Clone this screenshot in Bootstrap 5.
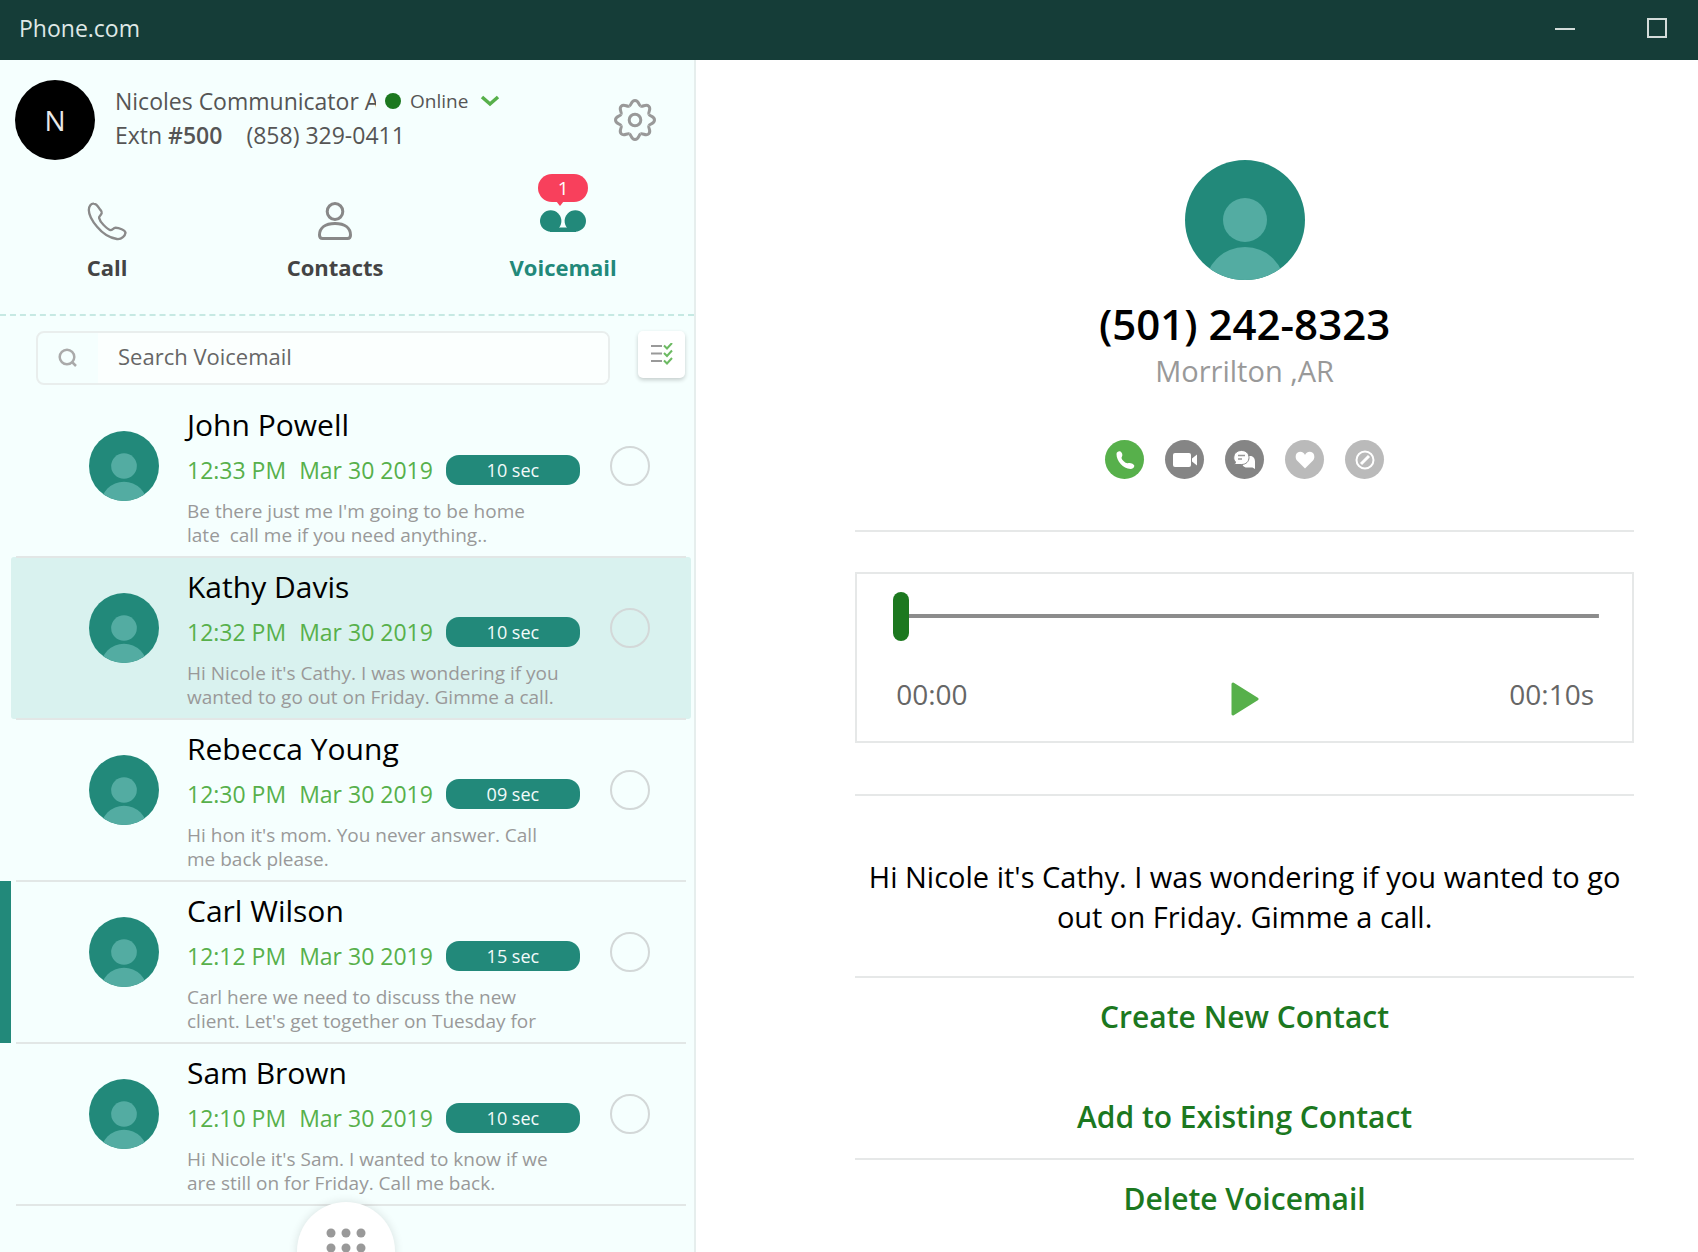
<!DOCTYPE html>
<html lang="en">
<head>
<meta charset="utf-8">
<meta name="viewport" content="width=device-width, initial-scale=1">
<title>Phone.com</title>
<link href="https://cdn.jsdelivr.net/npm/bootstrap@5.3.0/dist/css/bootstrap.min.css" rel="stylesheet">
<style>
:root { --teal: #22897a; --mint: #f5fffe; --leaf: #57b04b; --forest: #1c781f; --rule: #e6e8e8; }
body { font-family: "Open Sans", "Noto Sans", sans-serif; color: #000; background: #fff; height: 100vh; overflow: hidden; }
svg { display: block; flex-shrink: 0; }
.btn { --bs-btn-padding-x: 0; --bs-btn-padding-y: 0; --bs-btn-border-width: 0; }
.title-bar { background: #153d38; height: 60px; color: #dfe8e6; font-size: 23px; padding: 0 31px 4px 19px; }
.window-buttons { gap: 72px; }
.side-pane { flex: 0 0 41%; background: var(--mint); border-right: 2px solid #e6eeed; }
.profile { padding: 20px 37px 0 15px; color: #555; font-size: 23px; line-height: 34px; }
.initial { width: 80px; height: 80px; background: #000; color: #e8e8e8; font-size: 28px; }
.account { margin-left: 20px; padding-bottom: 5px; }
.account-name { width: 261px; white-space: nowrap; overflow: hidden; }
.status-dot { width: 16px; height: 16px; background: var(--forest); margin: 0 9px; }
.status-btn { font-size: 19px; line-height: 30px; color: #555; }
.tabs { padding: 42px 67px 32px 43px; border-bottom: 2px dashed #c6e9e3; }
.tab-link { width: 128px; font-size: 22px; line-height: 30px; font-weight: 700; color: #444; text-decoration: none; }
.tab-link.active { color: var(--teal); }
.tab-icon { height: 38px; margin-bottom: 12px; }
.count-bubble { position: absolute; left: 50%; top: -28px; width: 50px; height: 28px; margin-left: -25px; border-radius: 14px; background: #f8405c; color: #fff; font-size: 19px; font-weight: 400; line-height: 28px; text-align: center; }
.count-bubble::after { content: ""; position: absolute; left: 18px; top: 27px; border: 4px solid transparent; border-top: 5px solid #f8405c; }
.search-row { padding: 15px 9px 10px 36px; gap: 28px; }
.search-box { height: 54px; border: 2px solid #e9eeed; border-radius: 8px; overflow: hidden; }
.search-box label { width: 60px; }
.search-box input { border: 0; border-radius: 0; background: #fbfffe; padding: 0 20px 4px; font-size: 22px; color: #555; }
.search-box input::placeholder { color: #666; opacity: 1; }
.select-btn { width: 47px; height: 47px; border-radius: 5px; background: #fff; box-shadow: 0 2px 4px rgba(0,0,0,.2); }
.voicemail { position: relative; padding: 10px 41px 8px 78px; margin: 0 3px 0 11px; }
.voicemail::after { content: ""; position: absolute; left: 5px; right: 5px; bottom: -1px; height: 2px; background: #e2e7e6; z-index: 1; }
.voicemail.selected { background: #d9f2ef; border-radius: 3px; }
.voicemail.unread { margin-left: 0; border-left: 11px solid var(--teal); }
.voicemail .avatar { margin: 26px 28px 0 0; }
.vm-name { font-size: 30px; line-height: 40px; margin: 0; font-weight: 400; }
.vm-meta { font-size: 23px; line-height: 30px; margin-top: 10px; gap: 13px; color: var(--leaf); white-space: nowrap; }
.vm-length { flex: 0 0 134px; border-radius: 13px; background: var(--teal); color: #f2fbfa; font-size: 18px; text-align: center; }
.vm-text { font-size: 19px; line-height: 24px; margin: 14px 0 2px; color: #999; white-space: nowrap; }
.vm-check { width: 40px; height: 40px; margin: 41px 0 0; border: 2px solid #d3d8d8; background-color: transparent; }
.keypad-btn { position: absolute; left: 50%; bottom: -48px; width: 98px; height: 98px; margin-left: -50px; border-radius: 50%; background: #fff; box-shadow: 0 0 10px rgba(0,0,0,.12); z-index: 2; }
.detail-pane { padding: 100px 64px 0 159px; }
.caller { font-size: 42px; line-height: 50px; font-weight: 600; margin: 19px 0 2px; }
.place { font-size: 29px; line-height: 40px; color: #999; margin: 0 0 49px; }
.round-actions { gap: 21px; margin-bottom: 51px; }
.round-actions .btn { width: 39px; height: 39px; border-radius: 50%; background: #858585; }
.round-actions .btn.call { background: var(--leaf); }
.round-actions .btn.muted { background: #bababa; }
.rule { width: 100%; height: 2px; border: 0; margin: 0; background: var(--rule); opacity: 1; }
.player { margin: 40px 0 51px; padding: 17px 33px 25px 36px; border: 2px solid var(--rule); }
.seek { display: block; width: 100%; height: 50px; appearance: none; -webkit-appearance: none; background: linear-gradient(#8c8c8c, #8c8c8c) center / 100% 4px no-repeat; margin: 0; }
.seek::-webkit-slider-thumb { -webkit-appearance: none; width: 16px; height: 49px; border-radius: 8px; background: var(--forest); border: 0; }
.times { font-size: 28px; line-height: 40px; color: #666; margin-top: 33px; padding: 0 5px 0 3px; }
.transcript { font-size: 29px; line-height: 40px; margin: 61px 0 39px; }
.contact-link { font-size: 30px; line-height: 40px; font-weight: 600; color: var(--forest); text-decoration: none; }
.contact-links { padding: 19px 0 21px; gap: 60px; }
</style>
</head>
<body class="d-flex flex-column">
<svg width="0" height="0" class="position-absolute" aria-hidden="true">
  <defs>
    <clipPath id="disc"><circle cx="60" cy="60" r="60"/></clipPath>
    <symbol id="person" viewBox="0 0 120 120">
      <g clip-path="url(#disc)"><rect width="120" height="120" fill="#22897a"/><circle cx="60" cy="60" r="22" fill="#53aca2"/><circle cx="60" cy="127" r="40" fill="#53aca2"/></g>
    </symbol>
    <path id="lobe" d="M-5.7-13.9C-3.4-14.8-4-19.5 0-19.5S3.4-14.8 5.7-13.9"/>
    <symbol id="handset" viewBox="22 18 120 118">
      <path d="M27 42C27 30 34 22 42 23C52 24 55 32 59 38C63 44 68 46 66 52C64 58 57 61 58 66C60 74 64 80 71 87C78 94 86 101 92 103C99 104 100 96 108 96C118 96 137 103 138 111C137 119 127 132 112 130C92 127 70 115 52 93C37 75 27 57 27 42Z"/>
    </symbol>
  </defs>
</svg>

<header class="title-bar d-flex align-items-center justify-content-between flex-shrink-0">
  <span>Phone.com</span>
  <div class="window-buttons d-flex">
    <button class="btn" aria-label="Minimize"><svg width="20" height="20"><path d="M0 11H20" stroke="#d3dcda" stroke-width="2"/></svg></button>
    <button class="btn" aria-label="Maximize"><svg width="20" height="20"><rect x="1" y="1" width="18" height="18" fill="none" stroke="#d3dcda" stroke-width="2"/></svg></button>
  </div>
</header>

<div class="d-flex flex-grow-1 overflow-hidden">
  <aside class="side-pane position-relative overflow-hidden">
    <div class="profile d-flex align-items-center">
      <div class="initial rounded-circle d-flex align-items-center justify-content-center flex-shrink-0">N</div>
      <div class="account">
        <div class="d-flex align-items-center">
          <span class="account-name">Nicoles Communicator A</span>
          <span class="status-dot rounded-circle"></span>
          <button class="btn status-btn d-flex align-items-center gap-2">Online
            <svg class="ms-1" width="20" height="12" viewBox="0 0 20 12" fill="none" stroke="#57b04b" stroke-width="3.500"><path d="M2 2L10 9L18 2"/></svg>
          </button>
        </div>
        <div class="d-flex"><span>Extn <span class="fw-semibold">#500</span></span><span class="ms-4">(858) 329-0411</span></div>
      </div>
      <button class="btn ms-auto" aria-label="Settings">
        <svg width="44" height="44" viewBox="-22 -22 44 44" fill="none" stroke="#999" stroke-width="3">
          <use href="#lobe"/><use href="#lobe" transform="rotate(45)"/><use href="#lobe" transform="rotate(90)"/><use href="#lobe" transform="rotate(135)"/><use href="#lobe" transform="rotate(180)"/><use href="#lobe" transform="rotate(225)"/><use href="#lobe" transform="rotate(270)"/><use href="#lobe" transform="rotate(315)"/><circle r="5.8"/>
        </svg>
      </button>
    </div>

    <nav class="tabs d-flex justify-content-between">
      <a class="tab-link text-center" href="#">
        <span class="tab-icon d-flex align-items-center justify-content-center"><svg width="40" height="39" fill="none" stroke="#8a8a8a" stroke-width="7"><use href="#handset"/></svg></span>Call</a>
      <a class="tab-link text-center" href="#">
        <span class="tab-icon d-flex align-items-center justify-content-center"><svg width="36" height="38" viewBox="0 0 36 38" fill="none" stroke="#888" stroke-width="3"><ellipse cx="18" cy="9.500" rx="7.800" ry="8"/><path d="M2.500 33C2.500 26 8 21.500 18 21.500S33.500 26 33.500 33Q33.500 36.500 30.500 36.500H5.500Q2.500 36.500 2.500 33Z"/></svg></span>Contacts</a>
      <a class="tab-link active text-center position-relative" href="#" aria-current="page">
        <span class="tab-icon d-flex align-items-center justify-content-center"><svg width="46" height="22" viewBox="0 0 46 22" fill="#22897a"><circle cx="10.700" cy="11" r="10.700"/><circle cx="35.300" cy="11" r="10.700"/><path d="M10 22V10H20.500Q20.500 15 18.500 17.500H27.500Q25.500 15 25.500 10H36V22Z"/></svg></span>Voicemail
        <span class="count-bubble">1</span></a>
    </nav>

    <div class="search-row d-flex">
      <div class="search-box d-flex flex-grow-1">
        <label for="search" class="d-flex align-items-center justify-content-center flex-shrink-0" aria-label="Search"><svg width="20" height="20" fill="none" stroke="#aaa" stroke-width="2.500"><circle cx="9" cy="9" r="7.300"/><path d="M13.500 13.500L18 18"/></svg></label>
        <input id="search" class="form-control shadow-none" type="text" placeholder="Search Voicemail">
      </div>
      <button class="btn select-btn d-flex align-items-center justify-content-center flex-shrink-0" aria-label="Select voicemails">
        <svg width="24" height="24" fill="none"><path d="M1 3H12M1 10.500H12M1 18H12" stroke="#999" stroke-width="2"/><path d="M14 2.500L17 5.500L22 0M14 10L17 13L22 7.500M14 17.500L17 20.500L22 15" stroke="#6cba62" stroke-width="2"/></svg>
      </button>
    </div>

    <ul class="list-unstyled m-0">
      <li class="voicemail d-flex align-items-start">
        <svg class="avatar" width="70" height="70"><use href="#person"/></svg>
        <div><h2 class="vm-name">John Powell</h2>
          <div class="vm-meta d-flex"><span>12:33 PM</span><span>Mar 30 2019</span><span class="vm-length">10 sec</span></div>
          <p class="vm-text">Be there just me I'm going to be home<br>late&nbsp; call me if you need anything..</p></div>
        <input class="form-check-input vm-check rounded-circle ms-auto" type="checkbox" aria-label="Select John Powell">
      </li>
      <li class="voicemail selected d-flex align-items-start">
        <svg class="avatar" width="70" height="70"><use href="#person"/></svg>
        <div><h2 class="vm-name">Kathy Davis</h2>
          <div class="vm-meta d-flex"><span>12:32 PM</span><span>Mar 30 2019</span><span class="vm-length">10 sec</span></div>
          <p class="vm-text">Hi Nicole it's Cathy. I was wondering if you<br>wanted to go out on Friday. Gimme a call.</p></div>
        <input class="form-check-input vm-check rounded-circle ms-auto" type="checkbox" aria-label="Select Kathy Davis">
      </li>
      <li class="voicemail d-flex align-items-start">
        <svg class="avatar" width="70" height="70"><use href="#person"/></svg>
        <div><h2 class="vm-name">Rebecca Young</h2>
          <div class="vm-meta d-flex"><span>12:30 PM</span><span>Mar 30 2019</span><span class="vm-length">09 sec</span></div>
          <p class="vm-text">Hi hon it's mom. You never answer. Call<br>me back please.</p></div>
        <input class="form-check-input vm-check rounded-circle ms-auto" type="checkbox" aria-label="Select Rebecca Young">
      </li>
      <li class="voicemail unread d-flex align-items-start">
        <svg class="avatar" width="70" height="70"><use href="#person"/></svg>
        <div><h2 class="vm-name">Carl Wilson</h2>
          <div class="vm-meta d-flex"><span>12:12 PM</span><span>Mar 30 2019</span><span class="vm-length">15 sec</span></div>
          <p class="vm-text">Carl here we need to discuss the new<br>client. Let's get together on Tuesday for</p></div>
        <input class="form-check-input vm-check rounded-circle ms-auto" type="checkbox" aria-label="Select Carl Wilson">
      </li>
      <li class="voicemail d-flex align-items-start">
        <svg class="avatar" width="70" height="70"><use href="#person"/></svg>
        <div><h2 class="vm-name">Sam Brown</h2>
          <div class="vm-meta d-flex"><span>12:10 PM</span><span>Mar 30 2019</span><span class="vm-length">10 sec</span></div>
          <p class="vm-text">Hi Nicole it's Sam. I wanted to know if we<br>are still on for Friday. Call me back.</p></div>
        <input class="form-check-input vm-check rounded-circle ms-auto" type="checkbox" aria-label="Select Sam Brown">
      </li>
    </ul>

    <button class="btn keypad-btn d-flex justify-content-center" aria-label="Keypad">
      <svg class="mt-4" width="42" height="56" fill="#999"><circle cx="6" cy="7" r="4.500"/><circle cx="21" cy="7" r="4.500"/><circle cx="36" cy="7" r="4.500"/><circle cx="6" cy="22" r="4.500"/><circle cx="21" cy="22" r="4.500"/><circle cx="36" cy="22" r="4.500"/><circle cx="6" cy="37" r="4.500"/><circle cx="21" cy="37" r="4.500"/><circle cx="36" cy="37" r="4.500"/></svg>
    </button>
  </aside>

  <main class="detail-pane flex-grow-1 d-flex flex-column align-items-center text-center">
    <svg width="120" height="120"><use href="#person"/></svg>
    <h1 class="caller">(501) 242-8323</h1>
    <p class="place">Morrilton ,AR</p>
    <div class="round-actions d-flex">
      <button class="btn call d-flex align-items-center justify-content-center" aria-label="Call"><svg width="20" height="20" fill="#fff"><path d="M1.500 4C1.500 2 4 .8 5.500 1.500C7 2.500 8 5 7 6.500C6 8 6.500 9 8.500 11C10.500 13 12 13.500 13.500 13C15.500 12.500 19 14 19.300 15.500C19.500 17.500 17.500 19 15.500 19C8 18.500 1.500 11 1.500 4Z"/></svg></button>
      <button class="btn d-flex align-items-center justify-content-center" aria-label="Video call"><svg width="24" height="16" fill="#fff"><rect y="1" width="18" height="14" rx="2"/><path d="M19 6.500L24 2.500V13.500L19 9.500Z"/></svg></button>
      <button class="btn d-flex align-items-center justify-content-center" aria-label="Message"><svg width="24" height="20"><path d="M12 6H17C20.500 6 22 8.500 22 11.500V19L19.500 17.500H14C10.500 17.500 9 15 9 12Z" fill="#fff"/><path d="M8.500.5C13 .5 16 3.500 16 7.500S13 14.500 8.500 14.500L1.500 14.500L2.500 12C1 10.500 .8 9 .8 7.500C.8 3.500 4 .5 8.500.5Z" fill="#fff" stroke="#858585"/><path d="M5 5.500H12M5 9H9" stroke="#999" stroke-width="1.500"/></svg></button>
      <button class="btn muted d-flex align-items-center justify-content-center" aria-label="Favorite"><svg width="20" height="18" fill="#fff"><path d="M10 17.500L2 9.500C-.5 6.500 .5 1 5 .8C7.500 .7 9.300 2.200 10 4C10.700 2.200 12.500 .7 15 .8C19.500 1 20.500 6.500 18 9.500Z"/></svg></button>
      <button class="btn muted d-flex align-items-center justify-content-center" aria-label="Block"><svg width="20" height="20" fill="none" stroke="#fff" stroke-width="2"><circle cx="10" cy="10" r="8.500"/><path d="M6 14L14 6" stroke-width="3"/></svg></button>
    </div>
    <hr class="rule">
    <section class="player w-100">
      <input class="seek" type="range" min="0" max="10" value="0" aria-label="Playback position">
      <div class="times d-flex align-items-start">
        <span class="col text-start">00:00</span>
        <button class="btn" aria-label="Play"><svg class="mt-2" width="28" height="34" fill="#57b04b" stroke="#57b04b" stroke-width="3" stroke-linejoin="round"><path d="M2 2L26 17L2 32Z"/></svg></button>
        <span class="col text-end">00:10s</span>
      </div>
    </section>
    <hr class="rule">
    <p class="transcript">Hi Nicole it's Cathy. I was wondering if you wanted to go out on Friday. Gimme a call.</p>
    <hr class="rule">
    <div class="contact-links d-flex flex-column">
      <a class="contact-link" href="#">Create New Contact</a>
      <a class="contact-link" href="#">Add to Existing Contact</a>
    </div>
    <hr class="rule">
    <div class="contact-links"><a class="contact-link" href="#">Delete Voicemail</a></div>
  </main>
</div>
<script src="https://cdn.jsdelivr.net/npm/bootstrap@5.3.0/dist/js/bootstrap.bundle.min.js"></script>
</body>
</html>
